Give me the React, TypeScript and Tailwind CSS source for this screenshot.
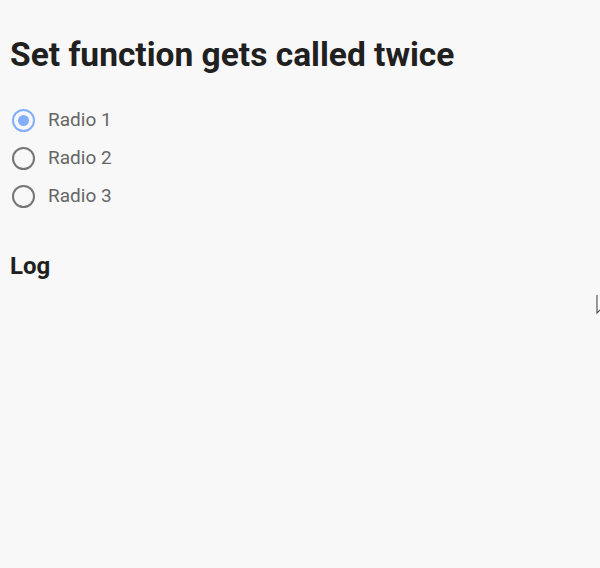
import React, { useState } from 'react';

const RADIOS = ['Radio 1', 'Radio 2', 'Radio 3'];

export default function App() {
  const [selected, setSelected] = useState(0);

  return (
    <div
      className="relative w-[600px] h-[568px] overflow-hidden bg-[#f8f8f8] px-[10px] pt-[36px]"
      style={{ fontFamily: 'Roboto, "Liberation Sans", sans-serif' }}
    >
      <h1 className="text-[33.5px] leading-[38px] font-bold text-[#202020]">Set function gets called twice</h1>

      <div className="mt-[35px] flex flex-col gap-[15px]">
        {RADIOS.map((label, i) => (
          <label key={label} className="flex items-center gap-[13px] h-[23px] cursor-pointer" onClick={() => setSelected(i)}>
            <span
              className={
                selected === i
                  ? 'ml-[2px] w-[23px] h-[23px] rounded-full border-2 border-[#82aefc] flex items-center justify-center'
                  : 'ml-[2px] w-[23px] h-[23px] rounded-full border-2 border-[#757575] flex items-center justify-center'
              }
            >
              {selected === i && <span className="w-[11px] h-[11px] rounded-full bg-[#82aefc]" />}
            </span>
            <span className="text-[19px] text-[#666666]">{label}</span>
          </label>
        ))}
      </div>

      <h2 className="mt-[43px] text-[24px] leading-[30px] font-bold text-[#202020]">Log</h2>

      <svg className="absolute left-[596px] top-[294px]" width="12" height="22" viewBox="0 0 12 22">
        <path d="M1 1 L1 19 L5 15 L9 21" fill="#fff" stroke="#555" strokeWidth="1.2" />
      </svg>
    </div>
  );
}
